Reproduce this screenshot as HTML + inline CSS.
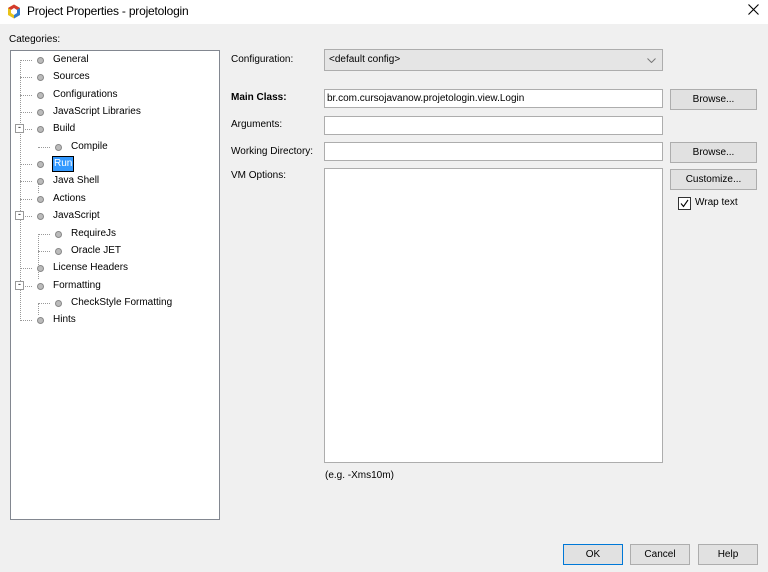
<!DOCTYPE html>
<html><head><style>
body{margin:0;width:768px;height:572px;background:#f0f0f0;font-family:"Liberation Sans",sans-serif;font-size:10px;color:#000;position:relative;overflow:hidden}
.a{position:absolute}
.title{left:0;top:0;width:768px;height:24px;background:#fff}
.inp{background:#fff;border:1px solid #adadad;box-sizing:border-box}
.btn{background:#e1e1e1;border:1px solid #adadad;box-sizing:border-box;text-align:center;line-height:19px}
.tree{left:10px;top:50px;width:210px;height:470px;background:#fff;border:1px solid #828790;box-sizing:border-box}
.it{position:absolute;height:14px;line-height:14px;white-space:nowrap}
.dot{position:absolute;width:5px;height:5px;border-radius:50%;background:#bbb;border:1px solid #888}
.hl{position:absolute;border-top:1px dotted #999;width:10px}
</style></head><body>
<div class="a title"></div>
<svg class="a" style="left:7px;top:4px" width="14" height="15" viewBox="0 0 14 15"><polygon points="7,0.5 13,4 13,11 7,14.5 1,11 1,4" fill="#e8c21a"/><polygon points="7,0.5 13,4 7,7.5 1,4" fill="#d43a2e"/><polygon points="13,4 13,11 7,14.5 7,7.5" fill="#2e7ccf"/><polygon points="7,4 10,6 10,9 7,11 4,9 4,6" fill="#fff"/></svg>
<div class="a" style="left:27px;top:4px;font-size:12px;letter-spacing:-0.2px">Project Properties - projetologin</div>
<svg class="a" style="left:748px;top:4px" width="11" height="11"><path d="M0.5 0.5L10.5 10.5M10.5 0.5L0.5 10.5" stroke="#000" stroke-width="1.1"/></svg>
<div class="a" style="left:9px;top:34px">Categories:</div>
<div class="a tree">
<div class="a" style="left:9px;top:9px;height:261px;border-left:1px dotted #999"></div>
<div class="a" style="left:27px;top:131px;height:11px;border-left:1px dotted #999"></div>
<div class="a" style="left:27px;top:183px;height:45px;border-left:1px dotted #999"></div>
<div class="a" style="left:27px;top:253px;height:11px;border-left:1px dotted #999"></div>
</div>
<div id="t"></div>
<script>
var items=[["General",0],["Sources",0],["Configurations",0],["JavaScript Libraries",0],["Build",0,1],["Compile",1],["Run",0],["Java Shell",0],["Actions",0],["JavaScript",0,1],["RequireJs",1],["Oracle JET",1],["License Headers",0],["Formatting",0,1],["CheckStyle Formatting",1],["Hints",0]];
var h="";items.forEach(function(it,i){var y=53+i*17.35;var x=it[1]?71:53;var dx=it[1]?55:37;
h+='<div class="hl" style="left:'+(it[1]?38:20)+'px;top:'+(y+7)+'px;width:12px"></div>';
h+='<div class="dot" style="left:'+dx+'px;top:'+(y+4)+'px"></div>';
if(it[2])h+='<div class="a" style="left:15px;top:'+(y+2)+'px;width:9px;height:9px;border:1px solid #999;background:#fff;box-sizing:border-box;line-height:5px;text-align:center;font-size:9px">-</div>';
if(it[0]=="Run")h+='<div class="it" style="left:'+(x-1)+'px;top:'+(y-1)+'px;background:#3399ff;color:#fff;border:1px solid #000;padding:0 1px;height:14px">Run</div>';
else h+='<div class="it" style="left:'+x+'px;top:'+y+'px">'+it[0]+'</div>';});
document.getElementById("t").innerHTML=h;
</script>
<div class="a" style="left:231px;top:54px">Configuration:</div>
<div class="a" style="left:324px;top:49px;width:339px;height:22px;background:#e5e5e5;border:1px solid #adadad;box-sizing:border-box;padding-left:4px;line-height:20px">&lt;default config&gt;<svg style="position:absolute;right:6px;top:8px" width="9" height="5"><path d="M0.5 0.5L4.5 4.5L8.5 0.5" fill="none" stroke="#777"/></svg></div>
<div class="a" style="left:231px;top:92px;font-weight:bold">Main Class:</div>
<div class="a inp" style="left:324px;top:89px;width:339px;height:19px;padding-left:2px;line-height:17px">br.com.cursojavanow.projetologin.view.Login</div>
<div class="a btn" style="left:670px;top:89px;width:87px;height:21px">Browse...</div>
<div class="a" style="left:231px;top:119px">Arguments:</div>
<div class="a inp" style="left:324px;top:116px;width:339px;height:19px"></div>
<div class="a" style="left:231px;top:146px">Working Directory:</div>
<div class="a inp" style="left:324px;top:142px;width:339px;height:19px"></div>
<div class="a btn" style="left:670px;top:142px;width:87px;height:21px">Browse...</div>
<div class="a" style="left:231px;top:170px">VM Options:</div>
<div class="a inp" style="left:324px;top:168px;width:339px;height:295px"></div>
<div class="a btn" style="left:670px;top:169px;width:87px;height:21px">Customize...</div>
<div class="a" style="left:678px;top:197px;width:13px;height:13px;border:1px solid #333;background:#fff;box-sizing:border-box"><svg style="position:absolute;left:1px;top:1px" width="9" height="9"><path d="M1 4.5L3.5 7.5L8 1" fill="none" stroke="#000" stroke-width="1.1"/></svg></div>
<div class="a" style="left:695px;top:197px">Wrap text</div>
<div class="a" style="left:325px;top:470px">(e.g. -Xms10m)</div>
<div class="a btn" style="left:563px;top:544px;width:60px;height:21px;border:1px solid #0078d7">OK</div>
<div class="a btn" style="left:630px;top:544px;width:60px;height:21px">Cancel</div>
<div class="a btn" style="left:698px;top:544px;width:60px;height:21px">Help</div>
</body></html>
